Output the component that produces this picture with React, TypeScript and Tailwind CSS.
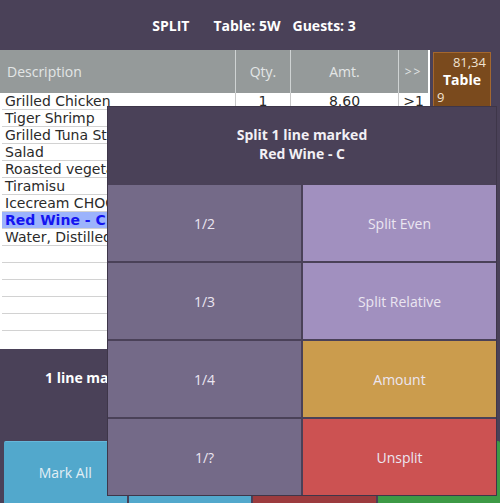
import React from "react";

const rows = [
  { d: "Grilled Chicken", q: "1", a: "8.60", m: ">1" },
  { d: "Tiger Shrimp" },
  { d: "Grilled Tuna Steak" },
  { d: "Salad" },
  { d: "Roasted vegetables" },
  { d: "Tiramisu" },
  { d: "Icecream CHOCOLATE" },
  { d: "Red Wine - C", sel: true },
  { d: "Water, Distilled" },
  { d: "" },
  { d: "" },
  { d: "" },
  { d: "" },
  { d: "" },
] as { d: string; q?: string; a?: string; m?: string; sel?: boolean }[];

export default function App() {
  return (
    <div className="relative w-[500px] h-[503px] overflow-hidden bg-[#4a4158] flex flex-col font-['Open_Sans',sans-serif]">
      {/* Top header */}
      <div className="h-[50px] flex items-center justify-center text-[14px] font-bold text-white pl-[8px]">
        <span className="mr-[24px]">SPLIT</span>
        <span className="mr-[12px]">Table: 5W</span>
        <span>Guests: 3</span>
      </div>

      {/* Table + right panel */}
      <div className="flex h-[299px]">
        <div className="w-[430px] bg-white flex flex-col">
          <div className="w-[428px] h-[43px] bg-[#959a9a] flex text-[14px] text-[#e3e6e6]">
            <div className="w-[235px] flex items-center pl-[7px]">Description</div>
            <div className="w-[55px] flex items-center justify-center border-l border-[#cfd3d3]">Qty.</div>
            <div className="w-[108px] flex items-center justify-center border-l border-[#cfd3d3]">Amt.</div>
            <div className="w-[30px] flex items-center justify-center border-l border-[#cfd3d3] text-[12px] tracking-[2px]">&gt;&gt;</div>
          </div>
          <div className="w-[428px] flex flex-col font-['DejaVu_Sans',sans-serif] text-[14px] leading-[16px] text-[#2a2a2a]">
            {rows.map((r, i) => (
              <div
                key={i}
                className={`ml-[2px] h-[17px] flex border-b border-[#d2d2d2] ${r.sel ? "bg-[#9cb3fc] text-[#1414f0] font-bold" : ""}`}
              >
                <div className="w-[233px] pl-[3px] whitespace-nowrap overflow-hidden">{r.d}</div>
                <div className="w-[55px] border-l border-[#c8c8c8] text-center">{r.q}</div>
                <div className="w-[108px] border-l border-[#c8c8c8] text-center">{r.a}</div>
                <div className="w-[30px] border-l border-[#c8c8c8] text-center">{r.m}</div>
              </div>
            ))}
          </div>
        </div>
        <div className="flex-1 pl-[3px] pt-[2px]">
          <div className="w-[58px] h-[55px] bg-[#7a4a1d] border border-[#a4672e] flex flex-col justify-between py-[1px] text-[13px] leading-[16px] text-[#f0e2d2]">
            <div className="text-right pr-[4px]">81,34</div>
            <div className="text-center font-bold text-white text-[14px]">Table</div>
            <div className="pl-[3px]">9</div>
          </div>
        </div>
      </div>

      {/* Status area */}
      <div className="h-[92px] pl-[45px] pt-[18px] text-[14px] font-bold text-white">1 line marked</div>

      {/* Bottom buttons */}
      <div className="grid grid-cols-4 gap-[2px] pl-[4px] h-[62px] text-[14px] text-[#e2eff5]">
        <div className="bg-[#52a8cc] border-t border-[#66b7da] rounded-t-[2px] flex items-center justify-center">Mark All</div>
        <div className="bg-[#52a8cc] border-t border-[#66b7da] rounded-t-[2px]"></div>
        <div className="bg-[#9c3b3e] rounded-t-[2px]"></div>
        <div className="bg-[#3d9a46] rounded-t-[2px]"></div>
      </div>

      {/* Modal */}
      <div className="absolute left-[107px] top-[106px] w-[390px] h-[390px] bg-[#4a4158] border border-[#3e3649] flex flex-col">
        <div className="h-[78px] flex flex-col items-center pt-[18px] text-[14px] leading-[19px] font-bold text-[#f2f0f5]">
          <div>Split 1 line marked</div>
          <div>Red Wine - C</div>
        </div>
        <div className="grid grid-cols-2 grid-rows-4 gap-[2px] h-[310px] text-[14px] text-[#ebe6f1]">
          <div className="bg-[#746a88] flex items-center justify-center">1/2</div>
          <div className="bg-[#a190bf] flex items-center justify-center">Split Even</div>
          <div className="bg-[#746a88] flex items-center justify-center">1/3</div>
          <div className="bg-[#a190bf] flex items-center justify-center">Split Relative</div>
          <div className="bg-[#746a88] flex items-center justify-center">1/4</div>
          <div className="bg-[#cb9c4d] flex items-center justify-center">Amount</div>
          <div className="bg-[#746a88] flex items-center justify-center">1/?</div>
          <div className="bg-[#cc5252] flex items-center justify-center">Unsplit</div>
        </div>
      </div>
    </div>
  );
}
